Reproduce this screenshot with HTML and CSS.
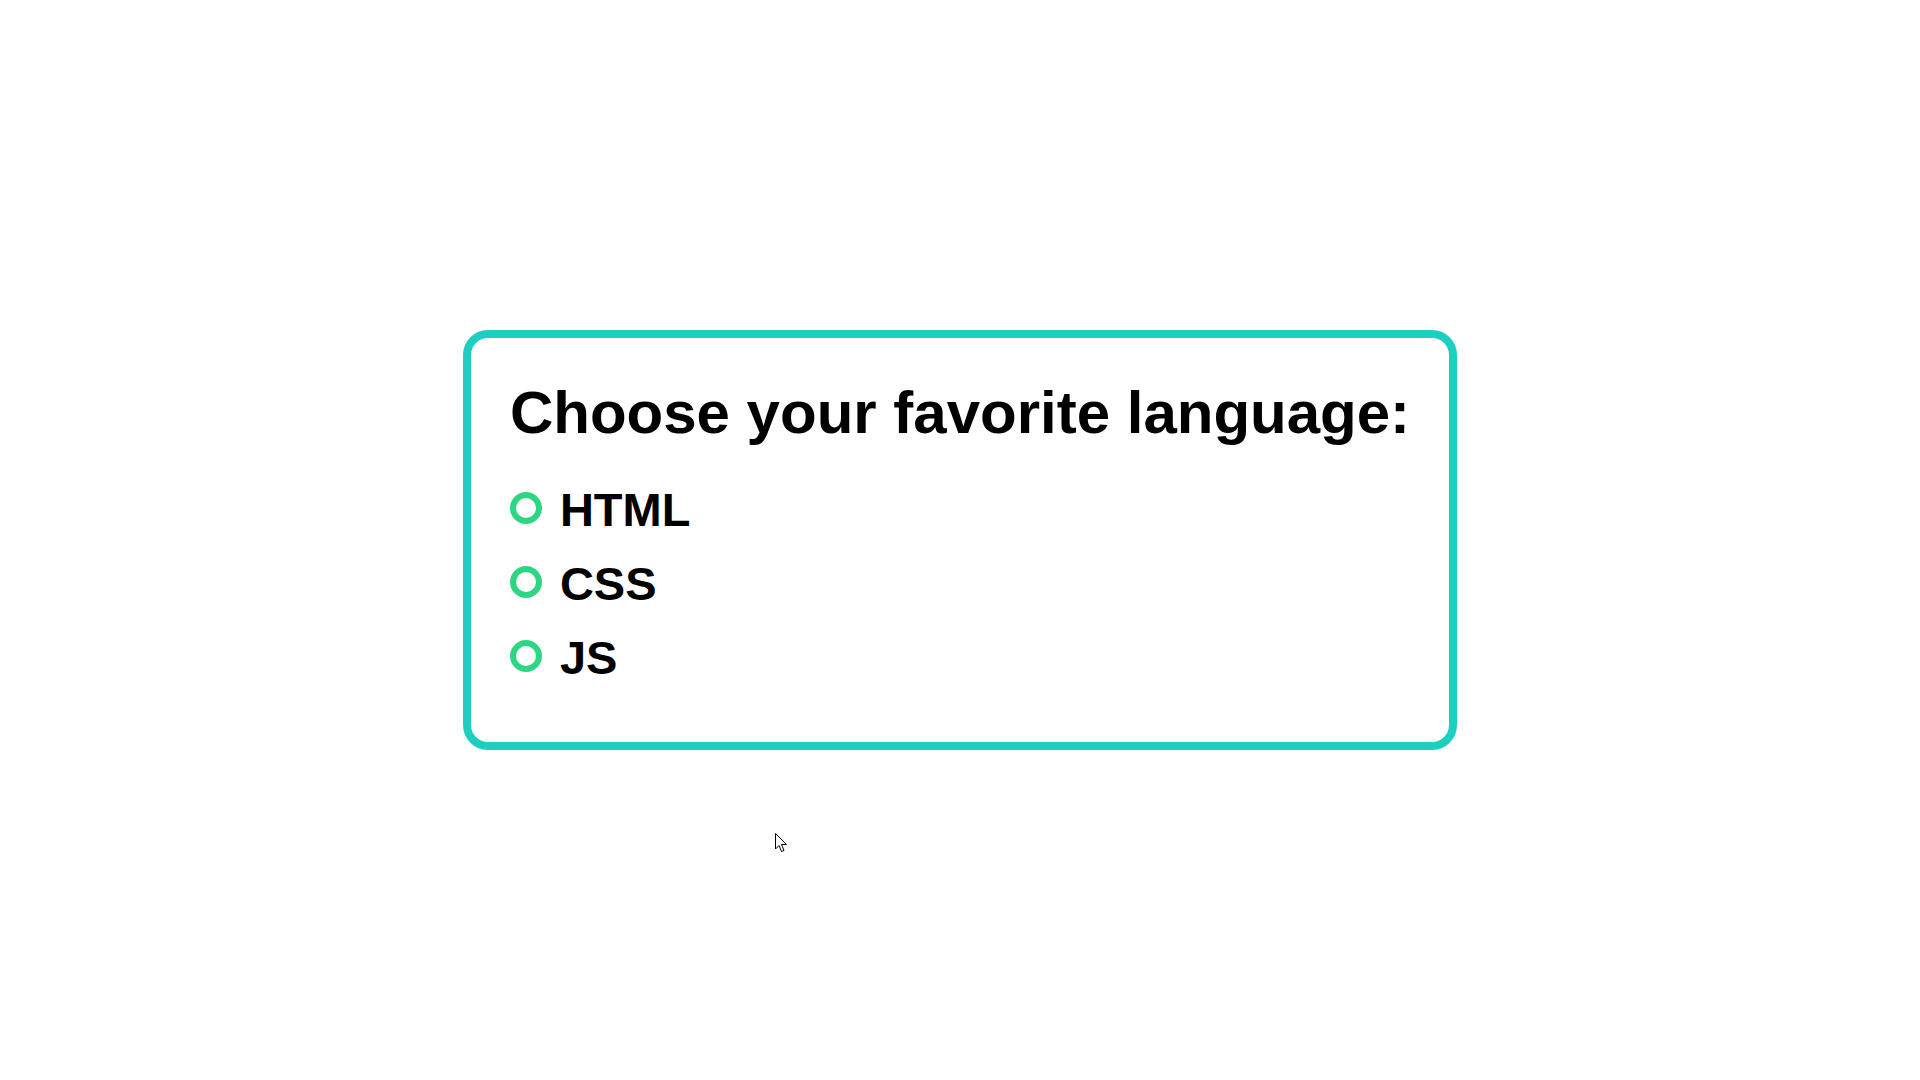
FILE: index.html
```html
<!DOCTYPE html>
<html lang="en">
<head>
    <meta charset="UTF-8">
    <meta name="viewport" content="width=device-width, initial-scale=1.0">
    <title>Radio buttons</title>
    <link rel="stylesheet" href="styles.css">
</head>
<body>
    <div class="card">
        <h1 class="title">Choose your favorite language:</h1>
        <div class="options">
            <label class="option">
                <span class="radio"></span>
                <span class="label">HTML</span>
            </label>
            <label class="option">
                <span class="radio"></span>
                <span class="label">CSS</span>
            </label>
            <label class="option">
                <span class="radio"></span>
                <span class="label">JS</span>
            </label>
        </div>
    </div>
    <svg class="cursor" width="13" height="20" viewBox="0 0 13 20">
        <path d="M0.5 0.5 L0.5 16 L4 12.5 L6.5 18.5 L9 17.5 L6.5 11.5 L11.5 11.5 Z" fill="#fff" stroke="#000" stroke-width="1" stroke-linejoin="round"/>
    </svg>
</body>
</html>
```

FILE: styles.css
```css
*{
    margin: 0;
    padding: 0;
    box-sizing: border-box;
}
body{
    height: 100vh;
    background: #fff;
    display: flex;
    align-items: center;
    justify-content: center;
    font-family: "Liberation Sans", Arial, sans-serif;
    color: #000;
}
.card{
    border: 8px solid #1dcfc1;
    border-radius: 25px;
    padding: 40px 39px 57px 39px;
}
.title{
    font-size: 60px;
    font-weight: bold;
    line-height: normal;
}
.options{
    margin-top: 35px;
    display: flex;
    flex-direction: column;
    gap: 19px;
}
.option{
    display: flex;
    align-items: center;
    gap: 18px;
    cursor: pointer;
}
.radio{
    width: 32px;
    height: 32px;
    border: 6px solid #2fd682;
    border-radius: 50%;
    margin-top: -4px;
}
.label{
    font-size: 47px;
    font-weight: bold;
    line-height: normal;
}
.cursor{
    position: absolute;
    left: 775px;
    top: 833px;
}
```
